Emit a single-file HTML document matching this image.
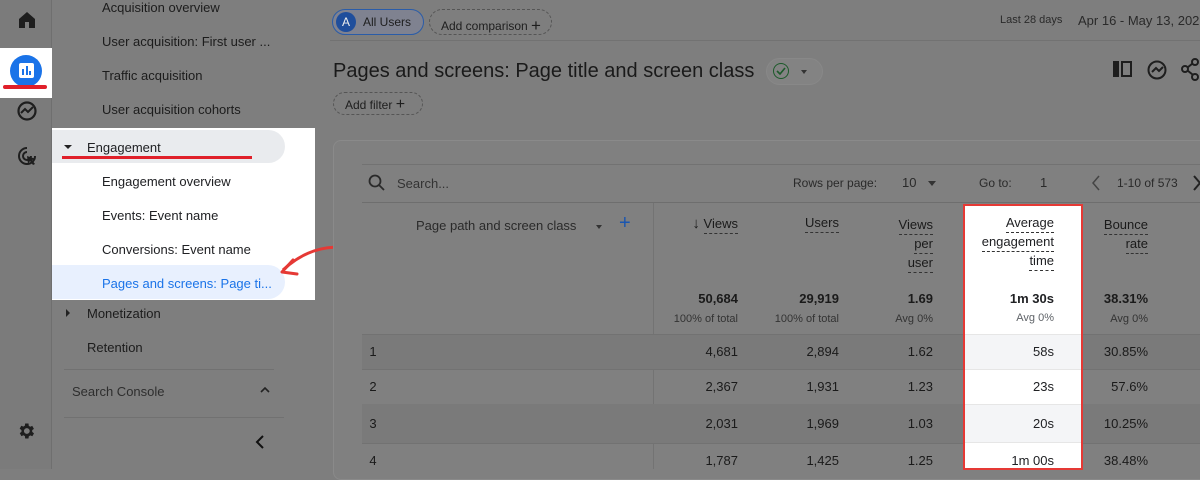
<!DOCTYPE html>
<html style="background:#7e7e7e"><head><style>
*{margin:0;padding:0;box-sizing:border-box}
html,body{background:#7e7e7e}
body{width:1200px;height:469px;overflow:hidden;font-family:"Liberation Sans",Arial,sans-serif;position:relative;color:#1a1a1a}
.a{position:absolute;white-space:nowrap}
.rail{left:0;top:0;width:52px;height:469px;background:#7b7b7b;border-right:1px solid #6f6f6f}
.nav{font-size:13px;color:#1c1c1c}
.card{left:333px;top:140px;width:880px;height:340px;background:#808080;border:1px solid #8a8a8a;border-radius:8px}
.hl{font-size:13px;color:#1a1a1a;text-align:right}
.sub{font-size:11px;color:#333;text-align:right}
.line{height:1px;background:#727272}
.dash{border-bottom:1px dashed #333;padding-bottom:2px}
</style></head><body>
<div class="a" style="left:0;top:0;width:1200px;height:469px;background:#7e7e7e"></div>
<div class="a rail"></div>
<svg class="a" style="left:17px;top:11px" width="20" height="18" viewBox="0 0 20 18"><path d="M2 8L10 1l8 7v9h-6v-6H8v6H2z" fill="#1e1e1e"/></svg>
<div class="a" style="left:0;top:48px;width:52px;height:50px;background:#fff"></div>
<div class="a" style="left:10px;top:55px;width:32px;height:32px;border-radius:50%;background:#1a73e8"></div>
<div class="a" style="left:19px;top:63px;width:15px;height:15px;background:#fff;border-radius:2px"></div>
<div class="a" style="left:22px;top:69px;width:2px;height:6px;background:#1a73e8"></div>
<div class="a" style="left:25.5px;top:66px;width:2px;height:9px;background:#1a73e8"></div>
<div class="a" style="left:29px;top:71px;width:2px;height:4px;background:#1a73e8"></div>
<div class="a" style="left:3px;top:85px;width:44px;height:4px;border-radius:2px;background:#e0202a"></div>
<svg class="a" style="left:16px;top:100px" width="22" height="22" viewBox="0 0 22 22"><circle cx="11" cy="11" r="8.5" fill="none" stroke="#1e1e1e" stroke-width="2.2"/><path d="M5 13l4-4 3 3 5-5" fill="none" stroke="#1e1e1e" stroke-width="2"/></svg>
<svg class="a" style="left:16px;top:145px" width="24" height="24" viewBox="0 0 24 24"><path d="M11 3a8 8 0 1 0 8 8" fill="none" stroke="#1e1e1e" stroke-width="2"/><path d="M11 7a4 4 0 1 0 4 4" fill="none" stroke="#1e1e1e" stroke-width="2"/><path d="M11 11l9 3-4 1 3 4-2 1-3-4-2 3z" fill="#1e1e1e"/></svg>
<svg class="a" style="left:16px;top:421px" width="20" height="20" viewBox="0 0 24 24"><path d="M19.4 13a7.5 7.5 0 0 0 0-2l2.1-1.6-2-3.5-2.5 1a7 7 0 0 0-1.700-1L15 3h-4l-.4 2.7a7 7 0 0 0-1.7 1l-2.5-1-2 3.5L6.6 11a7.5 7.5 0 0 0 0 2l-2.1 1.6 2 3.5 2.5-1a7 7 0 0 0 1.7 1L11 21h4l.4-2.7a7 7 0 0 0 1.7-1l2.5 1 2-3.5zM13 15.5a3.5 3.5 0 1 1 0-7 3.5 3.5 0 0 1 0 7z" fill="#1e1e1e"/></svg>

<div class="a nav" style="left:102px;top:0px">Acquisition overview</div>
<div class="a nav" style="left:102px;top:34px">User acquisition: First user ...</div>
<div class="a nav" style="left:102px;top:68px">Traffic acquisition</div>
<div class="a nav" style="left:102px;top:102px">User acquisition cohorts</div>
<div class="a" style="left:52px;top:128px;width:263px;height:172px;background:#fff"></div>
<div class="a" style="left:52px;top:130px;width:233px;height:33px;background:#e9ebee;border-radius:0 17px 17px 0"></div>
<div class="a" style="left:64px;top:145px;border-left:4px solid transparent;border-right:4px solid transparent;border-top:4px solid #222"></div>
<div class="a nav" style="left:87px;top:140px;color:#202124">Engagement</div>
<div class="a" style="left:62px;top:156px;width:190px;height:3px;background:#e0202a"></div>
<div class="a nav" style="left:102px;top:174px;color:#202124">Engagement overview</div>
<div class="a nav" style="left:102px;top:208px;color:#202124">Events: Event name</div>
<div class="a nav" style="left:102px;top:242px;color:#202124">Conversions: Event name</div>
<div class="a" style="left:52px;top:265px;width:233px;height:34px;background:#e8f0fe;border-radius:0 17px 17px 0"></div>
<div class="a nav" style="left:102px;top:276px;color:#1a73e8">Pages and screens: Page ti...</div>
<svg class="a" style="left:275px;top:240px" width="110" height="40" viewBox="0 0 110 40"><path d="M102 22C80 2 40 0 8 30" fill="none" stroke="#e53935" stroke-width="3"/><path d="M18 20L7 32l15 2" fill="none" stroke="#e53935" stroke-width="3" stroke-linecap="round" stroke-linejoin="round"/></svg>
<div class="a" style="left:66px;top:309px;border-top:4px solid transparent;border-bottom:4px solid transparent;border-left:4px solid #222"></div>
<div class="a nav" style="left:87px;top:306px">Monetization</div>
<div class="a nav" style="left:87px;top:340px">Retention</div>
<div class="a" style="left:64px;top:369px;width:210px;height:1px;background:#717171"></div>
<div class="a nav" style="left:72px;top:384px;color:#2e2e2e">Search Console</div>
<svg class="a" style="left:259px;top:385px" width="12" height="10"><path d="M2 7l4-4 4 4" fill="none" stroke="#222" stroke-width="1.6"/></svg>
<div class="a" style="left:64px;top:417px;width:220px;height:1px;background:#717171"></div>
<svg class="a" style="left:254px;top:434px" width="12" height="16"><path d="M9 2L3 8l6 6" fill="none" stroke="#111" stroke-width="2"/></svg>

<div class="a" style="left:332px;top:9px;width:92px;height:26px;border:1px solid #2a5ca8;border-radius:13px;background:#7f8290"></div>
<div class="a" style="left:336px;top:12px;width:20px;height:20px;border-radius:50%;background:#1f4e9c;color:#eee;font-size:12px;text-align:center;line-height:20px">A</div>
<div class="a" style="left:363px;top:15px;font-size:12px;color:#1e1e1e">All Users</div>
<div class="a" style="left:429px;top:9px;width:123px;height:26px;border:1px dashed #555;border-radius:13px"></div>
<div class="a" style="left:441px;top:15px;font-size:12px;color:#1e1e1e">Add comparison <span style="font-size:17px;position:relative;top:1px">+</span></div>
<div class="a" style="left:1000px;top:14px;font-size:11px;color:#2a2a2a">Last 28 days</div>
<div class="a" style="left:1078px;top:13px;font-size:13px;color:#2a2a2a">Apr 16 - May 13, 202</div>
<div class="a" style="left:330px;top:40px;width:870px;height:1px;background:#727272"></div>
<div class="a" style="left:333px;top:60px;font-size:20px;color:#1a1a1a">Pages and screens: Page title and screen class</div>
<div class="a" style="left:766px;top:58px;width:57px;height:27px;border-radius:14px;background:#838383;border:1px solid #888"></div>
<div class="a" style="left:773px;top:63px;width:16px;height:16px;border-radius:50%;border:1.6px solid #1c5a2a"></div>
<svg class="a" style="left:776px;top:67px" width="10" height="8"><path d="M1 4l3 3 5-6" fill="none" stroke="#1c5a2a" stroke-width="1.6"/></svg>
<div class="a" style="left:801px;top:70px;border-left:3.5px solid transparent;border-right:3.5px solid transparent;border-top:4px solid #333"></div>
<div class="a" style="left:1113px;top:61px;width:6px;height:16px;background:#1e1e1e"></div>
<div class="a" style="left:1121px;top:61px;width:11px;height:16px;border:2px solid #1e1e1e"></div>
<svg class="a" style="left:1146px;top:59px" width="22" height="22" viewBox="0 0 22 22"><circle cx="11" cy="11" r="8.5" fill="none" stroke="#1e1e1e" stroke-width="2"/><path d="M6 13l4-4 3 3 4-4" fill="none" stroke="#1e1e1e" stroke-width="2"/></svg>
<svg class="a" style="left:1180px;top:58px" width="20" height="24"><circle cx="15" cy="4" r="3" fill="none" stroke="#1e1e1e" stroke-width="2"/><circle cx="5" cy="11" r="3" fill="none" stroke="#1e1e1e" stroke-width="2"/><circle cx="15" cy="19" r="3" fill="none" stroke="#1e1e1e" stroke-width="2"/><path d="M7.5 9.5l5-4M7.5 12.5l5 4" stroke="#1e1e1e" stroke-width="2"/></svg>
<div class="a" style="left:333px;top:92px;width:90px;height:23px;border:1px dashed #555;border-radius:12px"></div>
<div class="a" style="left:345px;top:96px;font-size:12px;color:#1e1e1e">Add filter <span style="font-size:16px">+</span></div>

<div class="a card"></div>
<div class="a line" style="left:362px;top:164px;width:838px"></div>
<svg class="a" style="left:368px;top:174px" width="18" height="18"><circle cx="7" cy="7" r="5.5" fill="none" stroke="#2a2a2a" stroke-width="1.8"/><path d="M11 11l5 5" stroke="#2a2a2a" stroke-width="1.8"/></svg>
<div class="a" style="left:397px;top:176px;font-size:13px;color:#333">Search...</div>
<div class="a" style="left:793px;top:176px;font-size:12px;color:#2a2a2a">Rows per page:</div>
<div class="a" style="left:902px;top:175px;font-size:13px;color:#2a2a2a">10</div>
<div class="a" style="left:928px;top:181px;border-left:4px solid transparent;border-right:4px solid transparent;border-top:5px solid #333"></div>
<div class="a" style="left:979px;top:176px;font-size:12px;color:#2a2a2a">Go to:</div>
<div class="a" style="left:1040px;top:175px;font-size:13px;color:#2a2a2a">1</div>
<svg class="a" style="left:1090px;top:175px" width="12" height="16"><path d="M9 1L3 8l6 7" fill="none" stroke="#444" stroke-width="1.5"/></svg>
<div class="a" style="left:1117px;top:176px;font-size:12px;color:#2a2a2a">1-10 of 573</div>
<svg class="a" style="left:1192px;top:175px" width="10" height="16"><path d="M2 1l6 7-6 7" fill="none" stroke="#222" stroke-width="2"/></svg>
<div class="a line" style="left:362px;top:202px;width:838px;background:#6e6e6e"></div>
<div class="a" style="left:653px;top:203px;width:1px;height:266px;background:#737373"></div>

<div class="a" style="left:416px;top:218px;font-size:13px;color:#2a2a2a">Page path and screen class</div>
<div class="a" style="left:596px;top:225px;border-left:3.5px solid transparent;border-right:3.5px solid transparent;border-top:4px solid #333"></div>
<div class="a" style="left:619px;top:212px;font-size:20px;color:#1a56b0">+</div>
<div class="a hl" style="left:660px;top:215px;width:78px"><span style="font-size:15px">↓</span> <span class="dash">Views</span></div>
<div class="a hl" style="left:760px;top:215px;width:79px"><span class="dash">Users</span></div>
<div class="a hl" style="left:860px;top:215px;width:73px;line-height:19px"><span class="dash">Views</span><br><span class="dash">per</span><br><span class="dash">user</span></div>

<div class="a hl" style="left:660px;top:291px;width:78px;font-weight:bold">50,684</div>
<div class="a hl" style="left:760px;top:291px;width:79px;font-weight:bold">29,919</div>
<div class="a hl" style="left:860px;top:291px;width:73px;font-weight:bold">1.69</div>
<div class="a sub" style="left:660px;top:313px;width:78px">100% of total</div>
<div class="a sub" style="left:760px;top:313px;width:79px">100% of total</div>
<div class="a sub" style="left:860px;top:313px;width:73px">Avg 0%</div>

<div class="a hl" style="left:1080px;top:215px;width:68px;line-height:19px"><span class="dash">Bounce</span><br><span class="dash">rate</span></div>
<div class="a hl" style="left:1080px;top:291px;width:68px;font-weight:bold">38.31%</div>
<div class="a sub" style="left:1080px;top:313px;width:68px">Avg 0%</div>

<div class="a" style="left:362px;top:334px;width:838px;height:35px;background:#7a7a7a"></div>
<div class="a line" style="left:362px;top:334px;width:838px"></div>
<div class="a line" style="left:362px;top:369px;width:838px"></div>
<div class="a line" style="left:362px;top:404px;width:838px"></div>
<div class="a line" style="left:362px;top:443px;width:838px"></div>
<div class="a" style="left:362px;top:404px;width:838px;height:39px;background:#7a7a7a"></div>
<div class="a hl" style="left:362px;top:344px;width:22px;text-align:center">1</div>
<div class="a hl" style="left:362px;top:379px;width:22px;text-align:center">2</div>
<div class="a hl" style="left:362px;top:416px;width:22px;text-align:center">3</div>
<div class="a hl" style="left:362px;top:453px;width:22px;text-align:center">4</div>
<div class="a hl" style="left:660px;top:344px;width:78px">4,681</div>
<div class="a hl" style="left:760px;top:344px;width:79px">2,894</div>
<div class="a hl" style="left:860px;top:344px;width:73px">1.62</div>
<div class="a hl" style="left:1080px;top:344px;width:68px">30.85%</div>
<div class="a hl" style="left:660px;top:379px;width:78px">2,367</div>
<div class="a hl" style="left:760px;top:379px;width:79px">1,931</div>
<div class="a hl" style="left:860px;top:379px;width:73px">1.23</div>
<div class="a hl" style="left:1080px;top:379px;width:68px">57.6%</div>
<div class="a hl" style="left:660px;top:416px;width:78px">2,031</div>
<div class="a hl" style="left:760px;top:416px;width:79px">1,969</div>
<div class="a hl" style="left:860px;top:416px;width:73px">1.03</div>
<div class="a hl" style="left:1080px;top:416px;width:68px">10.25%</div>
<div class="a hl" style="left:660px;top:453px;width:78px">1,787</div>
<div class="a hl" style="left:760px;top:453px;width:79px">1,425</div>
<div class="a hl" style="left:860px;top:453px;width:73px">1.25</div>
<div class="a hl" style="left:1080px;top:453px;width:68px">38.48%</div>

<div class="a" style="left:963px;top:204px;width:120px;height:266px;background:#fff;border:2px solid #e53935"></div>
<div class="a" style="left:965px;top:334px;width:116px;height:35px;background:#f4f5f7;border-top:1px solid #e6e6e6"></div>
<div class="a" style="left:965px;top:369px;width:116px;height:1px;background:#e6e6e6"></div>
<div class="a" style="left:965px;top:404px;width:116px;height:39px;background:#f4f5f7;border-top:1px solid #e6e6e6;border-bottom:1px solid #e6e6e6"></div>
<div class="a hl" style="left:970px;top:213px;width:84px;line-height:19px;color:#202124"><span class="dash">Average</span><br><span class="dash">engagement</span><br><span class="dash">time</span></div>
<div class="a hl" style="left:970px;top:291px;width:84px;font-weight:bold;color:#202124">1m 30s</div>
<div class="a sub" style="left:970px;top:312px;width:84px;color:#5f6368">Avg 0%</div>
<div class="a hl" style="left:970px;top:344px;width:84px;color:#202124">58s</div>
<div class="a hl" style="left:970px;top:379px;width:84px;color:#202124">23s</div>
<div class="a hl" style="left:970px;top:416px;width:84px;color:#202124">20s</div>
<div class="a hl" style="left:970px;top:453px;width:84px;color:#202124">1m 00s</div>
</body></html>
